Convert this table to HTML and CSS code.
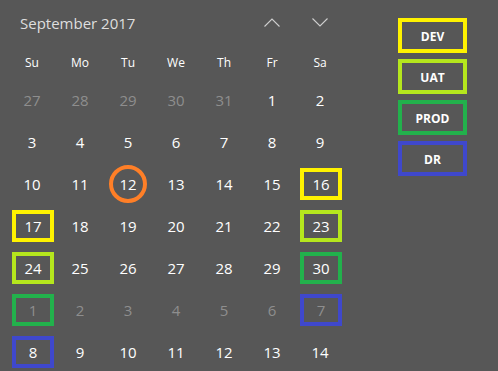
FILE: index.html
```html
<!DOCTYPE html>
<html lang="en">
<head>
<meta charset="utf-8">
<title>Calendar</title>
<link rel="stylesheet" href="styles.css">
</head>
<body>
<div class="page">
  <div class="calendar">
    <div class="cal-header">
      <div class="title">September 2017</div>
      <button class="nav" aria-label="Previous"><svg width="16" height="9" viewBox="0 0 16 9"><polyline points="0.5,8.5 8,1 15.5,8.5" fill="none" stroke="#cfcfcf" stroke-width="1.1"/></svg></button>
      <button class="nav" aria-label="Next"><svg width="16" height="9" viewBox="0 0 16 9"><polyline points="0.5,0.5 8,8 15.5,0.5" fill="none" stroke="#cfcfcf" stroke-width="1.1"/></svg></button>
    </div>
    <div class="weekdays">
      <span>Su</span><span>Mo</span><span>Tu</span><span>We</span><span>Th</span><span>Fr</span><span>Sa</span>
    </div>
    <div class="days">
      <span class="day out">27</span><span class="day out">28</span><span class="day out">29</span><span class="day out">30</span><span class="day out">31</span><span class="day">1</span><span class="day">2</span>
      <span class="day">3</span><span class="day">4</span><span class="day">5</span><span class="day">6</span><span class="day">7</span><span class="day">8</span><span class="day">9</span>
      <span class="day">10</span><span class="day">11</span><span class="day"><span class="today">12</span></span><span class="day">13</span><span class="day">14</span><span class="day">15</span><span class="day"><span class="mark dev">16</span></span>
      <span class="day"><span class="mark dev">17</span></span><span class="day">18</span><span class="day">19</span><span class="day">20</span><span class="day">21</span><span class="day">22</span><span class="day"><span class="mark uat">23</span></span>
      <span class="day"><span class="mark uat">24</span></span><span class="day">25</span><span class="day">26</span><span class="day">27</span><span class="day">28</span><span class="day">29</span><span class="day"><span class="mark prod">30</span></span>
      <span class="day out"><span class="mark prod">1</span></span><span class="day out">2</span><span class="day out">3</span><span class="day out">4</span><span class="day out">5</span><span class="day out">6</span><span class="day out"><span class="mark dr">7</span></span>
      <span class="day"><span class="mark dr">8</span></span><span class="day">9</span><span class="day">10</span><span class="day">11</span><span class="day">12</span><span class="day">13</span><span class="day">14</span>
    </div>
  </div>
  <div class="legend">
    <div class="tag dev">DEV</div>
    <div class="tag uat">UAT</div>
    <div class="tag prod">PROD</div>
    <div class="tag dr">DR</div>
  </div>
</div>
</body>
</html>
```

FILE: styles.css
```css
html, body {
  margin: 0;
  padding: 0;
  background: #575757;
}

body {
  font-family: "Open Sans", "Noto Sans", "DejaVu Sans", sans-serif;
  color: #ffffff;
  width: 498px;
  height: 371px;
  overflow: hidden;
}

.page {
  display: flex;
  align-items: flex-start;
}

.calendar {
  padding-left: 8px;
  width: 336px;
}

.cal-header {
  display: grid;
  grid-template-columns: repeat(7, 48px);
  height: 46px;
  align-items: start;
}

.title {
  grid-column: 1 / 6;
  padding-left: 12px;
  padding-top: 13px;
  font-size: 15px;
  line-height: 20px;
  color: #dedede;
  white-space: nowrap;
}

.nav {
  background: none;
  border: 0;
  padding: 0;
  margin: 0;
  height: 46px;
  display: flex;
  align-items: center;
  justify-content: center;
  padding-bottom: 1px;
}

.nav svg {
  display: block;
}

.weekdays {
  display: grid;
  grid-template-columns: repeat(7, 48px);
  height: 33px;
  align-items: center;
  font-size: 12px;
  color: #ffffff;
}

.weekdays span {
  text-align: center;
}

.days {
  display: grid;
  grid-template-columns: repeat(7, 48px);
  grid-auto-rows: 42px;
}

.day {
  display: flex;
  align-items: center;
  justify-content: center;
  font-size: 15px;
  color: #ffffff;
}

.day.out {
  color: #8e8e8e;
}

.mark {
  box-sizing: border-box;
  width: 42px;
  height: 32px;
  border-width: 4px;
  border-style: solid;
  display: flex;
  align-items: center;
  justify-content: center;
  margin-left: 2px;
}

.today {
  box-sizing: border-box;
  width: 38px;
  height: 38px;
  border: 4px solid #ff7f27;
  border-radius: 50%;
  display: flex;
  align-items: center;
  justify-content: center;
}

.legend {
  margin-left: 54px;
  padding-top: 18px;
  display: flex;
  flex-direction: column;
  gap: 6px;
}

.tag {
  box-sizing: border-box;
  width: 69px;
  height: 35px;
  border-width: 4px;
  border-style: solid;
  display: flex;
  align-items: center;
  justify-content: center;
  padding-top: 2px;
  font-size: 12px;
  font-weight: 700;
  color: #ffffff;
}

.dev { border-color: #fff200; }
.uat { border-color: #b5e61d; }
.prod { border-color: #22b14c; }
.dr { border-color: #3f48cc; }
```
